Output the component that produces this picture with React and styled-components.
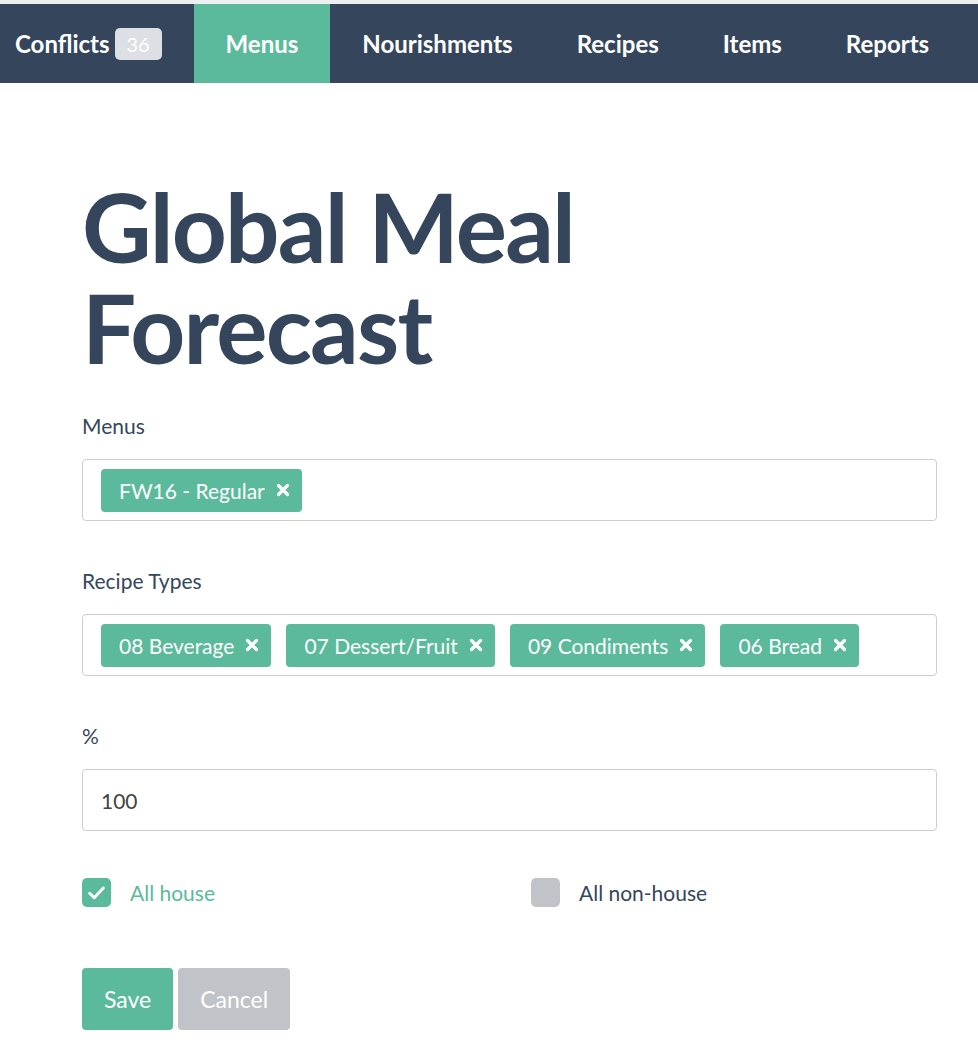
import React, { useState } from 'react';
import styled, { createGlobalStyle } from 'styled-components';

const GREEN = '#5bba9b';
const SLATE = '#35465c';
const GREY = '#c0c4c8';

const GlobalStyle = createGlobalStyle`
  html, body {
    margin: 0;
    padding: 0;
    background: #fff;
    font-family: Lato, "Open Sans", sans-serif;
    color: ${SLATE};
  }
  * { box-sizing: border-box; }
`;

// Top navigation
const TopStrip = styled.div`
  height: 4px;
  background: #eceff2;
`;

const NavBar = styled.nav`
  display: flex;
  height: 79px;
  background: ${SLATE};
`;

const NavItem = styled.a`
  display: flex;
  align-items: center;
  gap: 5px;
  padding: 0 32px;
  font-size: 24px;
  font-weight: 700;
  color: #fff;
  text-decoration: none;
  background: ${p => (p.$active ? GREEN : 'transparent')};
  &:first-child { padding-left: 15px; }
`;

const Badge = styled.span`
  display: inline-flex;
  align-items: center;
  justify-content: center;
  width: 47px;
  height: 32px;
  border-radius: 5px;
  background: #dcdfe3;
  color: #fff;
  font-size: 20px;
  font-weight: 400;
`;

// Page body
const Page = styled.main`
  padding: 92px 41px 0 82px;
`;

const Title = styled.h1`
  margin: 0 0 36px;
  font-size: 96px;
  line-height: 101px;
  font-weight: 700;
  letter-spacing: -1.8px;
  color: ${SLATE};
`;

const Field = styled.div`
  margin-bottom: 47px;
`;

const Label = styled.label`
  display: block;
  font-size: 21px;
  line-height: 25px;
  margin-bottom: 21px;
  color: ${SLATE};
`;

const Box = styled.div`
  display: flex;
  flex-wrap: wrap;
  align-items: center;
  gap: 15px;
  height: 62px;
  padding: 0 18px;
  border: 1px solid #cdcdcd;
  border-radius: 4px;
  background: #fff;
`;

const TextInput = styled.input`
  display: block;
  width: 100%;
  height: 62px;
  padding: 0 18px;
  border: 1px solid #cdcdcd;
  border-radius: 4px;
  font-family: inherit;
  font-size: 21px;
  color: #444;
  outline: none;
`;

const Tag = styled.span`
  display: inline-flex;
  align-items: center;
  gap: 11px;
  height: 43px;
  padding: 0 12px 0 18px;
  border-radius: 4px;
  background: ${GREEN};
  color: #fff;
  font-size: 21px;
`;

const Remove = styled.svg`
  width: 14px;
  height: 14px;
  flex-shrink: 0;
`;

const Checks = styled.div`
  display: grid;
  grid-template-columns: 449px 1fr;
  margin-top: 47px;
`;

const CheckRow = styled.label`
  display: flex;
  align-items: center;
  gap: 19px;
  font-size: 21px;
  color: ${p => (p.$on ? GREEN : SLATE)};
  cursor: pointer;
`;

const CheckBox = styled.span`
  display: inline-flex;
  align-items: center;
  justify-content: center;
  width: 29px;
  height: 29px;
  border-radius: 5px;
  background: ${p => (p.$on ? GREEN : GREY)};
`;

const Actions = styled.div`
  display: flex;
  gap: 5px;
  margin-top: 61px;
`;

const Button = styled.button`
  height: 62px;
  padding: 0 22px;
  border: none;
  border-radius: 4px;
  background: ${p => (p.$secondary ? GREY : GREEN)};
  color: #fff;
  font-family: inherit;
  font-size: 23px;
  cursor: pointer;
`;

const Cross = () => (
  <Remove viewBox="0 0 14 14">
    <path d="M2.5 2.5 L11.5 11.5 M11.5 2.5 L2.5 11.5" stroke="#fff" strokeWidth="3.2" strokeLinecap="round" />
  </Remove>
);

const Check = ({ label, on, onToggle }) => (
  <CheckRow $on={on} onClick={onToggle}>
    <CheckBox $on={on}>
      {on && (
        <svg width="21" height="21" viewBox="0 0 16 16">
          <path d="M2.8 8.6 L6.3 12 L13.2 4.6" fill="none" stroke="#fff" strokeWidth="2.3" strokeLinecap="round" strokeLinejoin="round" />
        </svg>
      )}
    </CheckBox>
    {label}
  </CheckRow>
);

const navItems = ['Menus', 'Nourishments', 'Recipes', 'Items', 'Reports'];

const App = () => {
  const [menus, setMenus] = useState(['FW16 - Regular']);
  const [types, setTypes] = useState(['08 Beverage', '07 Dessert/Fruit', '09 Condiments', '06 Bread']);
  const [percent, setPercent] = useState('100');
  const [house, setHouse] = useState(true);
  const [nonHouse, setNonHouse] = useState(false);

  return (
    <>
      <GlobalStyle />
      <TopStrip />
      <NavBar>
        <NavItem href="#">
          Conflicts <Badge>36</Badge>
        </NavItem>
        {navItems.map(item => (
          <NavItem key={item} href="#" $active={item === 'Menus'}>{item}</NavItem>
        ))}
      </NavBar>

      <Page>
        <Title>Global Meal<br />Forecast</Title>

        <Field>
          <Label>Menus</Label>
          <Box>
            {menus.map(m => (
              <Tag key={m} onClick={() => setMenus(menus.filter(x => x !== m))}>
                {m} <Cross />
              </Tag>
            ))}
          </Box>
        </Field>

        <Field>
          <Label>Recipe Types</Label>
          <Box>
            {types.map(t => (
              <Tag key={t} onClick={() => setTypes(types.filter(x => x !== t))}>
                {t} <Cross />
              </Tag>
            ))}
          </Box>
        </Field>

        <Field>
          <Label>%</Label>
          <TextInput value={percent} onChange={e => setPercent(e.target.value)} />
        </Field>

        <Checks>
          <Check label="All house" on={house} onToggle={() => setHouse(!house)} />
          <Check label="All non-house" on={nonHouse} onToggle={() => setNonHouse(!nonHouse)} />
        </Checks>

        <Actions>
          <Button>Save</Button>
          <Button $secondary>Cancel</Button>
        </Actions>
      </Page>
    </>
  );
};

export default App;
